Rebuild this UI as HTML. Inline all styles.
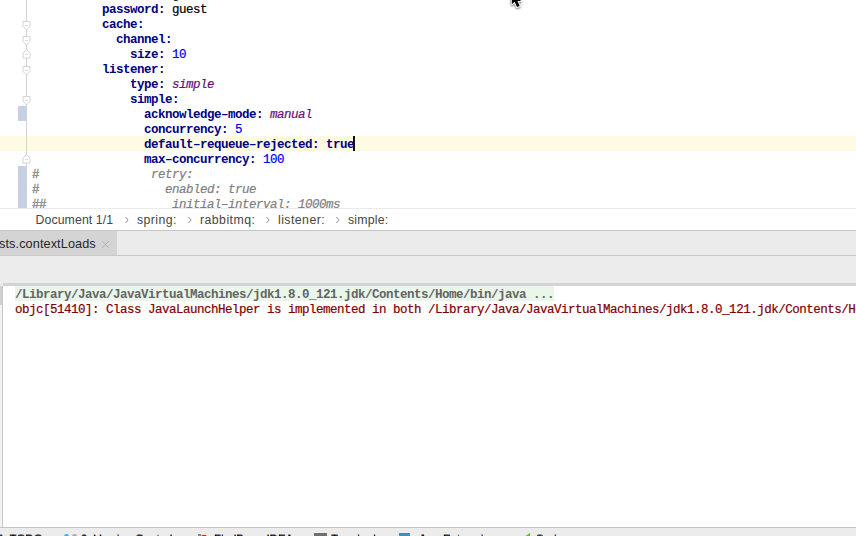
<!DOCTYPE html>
<html>
<head>
<meta charset="utf-8">
<style>
html,body{margin:0;padding:0;}
body{width:856px;height:536px;overflow:hidden;background:#fff;position:relative;font-family:"Liberation Sans",sans-serif;}
.abs{position:absolute;}
.ed{position:absolute;left:0;top:0;width:856px;height:208px;background:#fff;overflow:hidden;}
.ln{position:absolute;left:32px;height:15px;line-height:15px;white-space:pre;font-family:"Liberation Mono",monospace;font-size:12.5px;letter-spacing:-0.5px;color:#000;-webkit-text-stroke:0.2px;}
.k{color:#000080;font-weight:bold;-webkit-text-stroke:0;}
.n{color:#0000ff;}
.s{color:#660e7a;font-style:italic;}
.c{color:#808080;font-style:italic;}
.h{font-style:normal;-webkit-text-stroke:0.3px;}
.hl{position:absolute;left:0;top:136px;width:856px;height:15px;background:#fffae3;}
.gl{position:absolute;left:26px;top:0;width:1px;height:208px;background:#d2d2d2;}
.fm{position:absolute;left:22px;width:9px;height:10px;}
.chg{position:absolute;left:18px;width:8px;background:#c5d0e5;}
.caret{position:absolute;left:353.4px;top:136px;width:2px;height:15px;background:#111;}
.bc{position:absolute;left:0;top:208px;width:856px;height:22px;background:#fff;border-top:1px solid #ebebeb;box-sizing:border-box;font-size:12.3px;color:#454545;}
.bc span{position:absolute;top:4px;line-height:14px;white-space:pre;}
.tabbar{position:absolute;left:0;top:230px;width:856px;height:26px;background:#ebebeb;border-top:1px solid #c6c6c6;border-bottom:1px solid #c8c8c8;box-sizing:border-box;}
.tab{position:absolute;left:0;top:0;width:117px;height:24px;background:#d4d4d4;box-sizing:border-box;font-size:12.7px;color:#262626;}
.tb2{position:absolute;left:0;top:256px;width:856px;height:30px;background:#ececec;}
.con{position:absolute;left:3px;top:283px;width:853px;height:244px;background:#fff;overflow:hidden;}
.cl{position:absolute;left:12px;height:15px;line-height:15px;white-space:pre;font-family:"Liberation Mono",monospace;font-size:12.5px;letter-spacing:-0.5px;}
.bot{position:absolute;left:0;top:527px;width:856px;height:9px;background:#ececec;border-top:1px solid #c4c4c4;box-sizing:border-box;overflow:hidden;font-size:11.5px;color:#000;}
.bot span{position:absolute;top:4px;line-height:14px;white-space:pre;}
</style>
</head>
<body>
<div class="ed">
  <div class="hl"></div>
  <div class="gl"></div>
  <div class="chg" style="top:106px;height:15px;"></div>
  <div class="chg" style="top:166px;height:42px;"></div>
  <svg class="fm" style="top:21px;" viewBox="0 0 9 10"><path d="M1,0.5 H8 V5.3 L4.5,9 L1,5.3 Z" fill="#fff" stroke="#d4d4d4" stroke-width="1"/><path d="M3,4.5 H6" stroke="#dcdcdc" stroke-width="1"/></svg>
  <svg class="fm" style="top:36px;" viewBox="0 0 9 10"><path d="M1,0.5 H8 V5.3 L4.5,9 L1,5.3 Z" fill="#fff" stroke="#d4d4d4" stroke-width="1"/><path d="M3,4.5 H6" stroke="#dcdcdc" stroke-width="1"/></svg>
  <svg class="fm" style="top:66px;" viewBox="0 0 9 10"><path d="M1,0.5 H8 V5.3 L4.5,9 L1,5.3 Z" fill="#fff" stroke="#d4d4d4" stroke-width="1"/><path d="M3,4.5 H6" stroke="#dcdcdc" stroke-width="1"/></svg>
  <svg class="fm" style="top:96px;" viewBox="0 0 9 10"><path d="M1,0.5 H8 V5.3 L4.5,9 L1,5.3 Z" fill="#fff" stroke="#d4d4d4" stroke-width="1"/><path d="M3,4.5 H6" stroke="#dcdcdc" stroke-width="1"/></svg>
  <svg class="fm" style="top:49px;" viewBox="0 0 9 10"><path d="M1,9 H8 V4.2 L4.5,0.5 L1,4.2 Z" fill="#fff" stroke="#d4d4d4" stroke-width="1"/><path d="M3,5.5 H6" stroke="#dcdcdc" stroke-width="1"/></svg>
  <svg class="fm" style="top:154px;" viewBox="0 0 9 10"><path d="M1,9 H8 V4.2 L4.5,0.5 L1,4.2 Z" fill="#fff" stroke="#d4d4d4" stroke-width="1"/><path d="M3,5.5 H6" stroke="#dcdcdc" stroke-width="1"/></svg>

  <div class="ln" style="top:-12px;">          <span class="k">username:</span> guest</div>
  <div class="ln" style="top:3px;">          <span class="k">password:</span> guest</div>
  <div class="ln" style="top:18px;">          <span class="k">cache:</span></div>
  <div class="ln" style="top:33px;">            <span class="k">channel:</span></div>
  <div class="ln" style="top:48px;">              <span class="k">size:</span> <span class="n">10</span></div>
  <div class="ln" style="top:63px;">          <span class="k">listener:</span></div>
  <div class="ln" style="top:78px;">              <span class="k">type:</span> <span class="s">simple</span></div>
  <div class="ln" style="top:93px;">              <span class="k">simple:</span></div>
  <div class="ln" style="top:108px;">                <span class="k">acknowledge–mode:</span> <span class="s">manual</span></div>
  <div class="ln" style="top:123px;">                <span class="k">concurrency:</span> <span class="n">5</span></div>
  <div class="ln" style="top:138px;">                <span class="k">default–requeue–rejected:</span> <span class="k">true</span></div>
  <div class="ln" style="top:153px;">                <span class="k">max–concurrency:</span> <span class="n">100</span></div>
  <div class="ln c" style="top:168px;"><span class="h">#</span>                retry:</div>
  <div class="ln c" style="top:183px;"><span class="h">#</span>                  enabled: true</div>
  <div class="ln c" style="top:198px;"><span class="h">##</span>                  initial–interval: 1000ms</div>
  <div class="caret"></div>
</div>
<svg class="abs" style="left:500px;top:0;" width="30" height="16" viewBox="500 0 30 16"><defs><filter id="sh" x="-50%" y="-50%" width="200%" height="200%"><feGaussianBlur in="SourceAlpha" stdDeviation="0.9"/><feOffset dx="0" dy="0.8"/><feComponentTransfer><feFuncA type="linear" slope="0.7"/></feComponentTransfer><feMerge><feMergeNode/><feMergeNode in="SourceGraphic"/></feMerge></filter></defs><path d="M511.8,-10.8 L511.8,4.3 L514.7,1.7 L517.0,7.1 L519.7,6.0 L517.4,1.0 L520.9,1.0 Z" fill="#000" stroke="#fff" stroke-width="1.6" stroke-linejoin="round" paint-order="stroke" filter="url(#sh)"/></svg>
<div class="bc">
  <span style="left:35.5px;letter-spacing:0.1px;">Document 1/1</span>
  <span style="left:137px;letter-spacing:0.4px;">spring:</span>
  <span style="left:200px;letter-spacing:0.45px;">rabbitmq:</span>
  <span style="left:278px;letter-spacing:0.45px;">listener:</span>
  <span style="left:348px;letter-spacing:0.2px;">simple:</span>
  <svg class="abs" style="left:123.6px;top:6.7px;" width="6" height="8" viewBox="0 0 6 8"><path d="M1.5,1 L4.1,4 L1.5,7" fill="none" stroke="#959595" stroke-width="1"/></svg>
  <svg class="abs" style="left:186.6px;top:6.7px;" width="6" height="8" viewBox="0 0 6 8"><path d="M1.5,1 L4.1,4 L1.5,7" fill="none" stroke="#959595" stroke-width="1"/></svg>
  <svg class="abs" style="left:265.1px;top:6.7px;" width="6" height="8" viewBox="0 0 6 8"><path d="M1.5,1 L4.1,4 L1.5,7" fill="none" stroke="#959595" stroke-width="1"/></svg>
  <svg class="abs" style="left:334.7px;top:6.7px;" width="6" height="8" viewBox="0 0 6 8"><path d="M1.5,1 L4.1,4 L1.5,7" fill="none" stroke="#959595" stroke-width="1"/></svg>
</div>
<div class="tabbar">
  <div class="tab"><span class="abs" style="left:-1px;top:5px;line-height:16px;white-space:pre;letter-spacing:0.1px;">sts.contextLoads</span>
  <svg class="abs" style="left:101px;top:8.7px;" width="9" height="9" viewBox="0 0 9 9"><path d="M1,1 L8,8 M8,1 L1,8" fill="none" stroke="#b4b4b4" stroke-width="1"/></svg></div>
</div>
<div class="tb2"></div>
<div class="abs" style="left:0;top:286px;width:2px;height:241px;background:#f2f2f2;"></div>
<div class="abs" style="left:0;top:286px;width:2px;height:19px;background:#d0d0d0;"></div>
<div class="abs" style="left:2px;top:286px;width:1px;height:241px;background:#c6c6c6;"></div>
<div class="con">
  <div class="abs" style="left:0;top:0;width:854px;height:3px;background:#d4d4d4;"></div>
  <div class="abs" style="left:12px;top:3px;width:539px;height:15px;background:#e9f6e9;"></div>
  <div class="cl" style="top:5px;color:#646464;font-weight:bold;">/Library/Java/JavaVirtualMachines/jdk1.8.0_121.jdk/Contents/Home/bin/java ...</div>
  <div class="cl" style="top:20px;color:#7f0000;-webkit-text-stroke:0.2px #7f0000;">objc[51410]: Class JavaLaunchHelper is implemented in both /Library/Java/JavaVirtualMachines/jdk1.8.0_121.jdk/Contents/Home/bin/java and more</div>
</div>
<div class="bot">
  <span style="left:-3px;">6: TODO</span>
  <span style="left:81px;">9: Version Control</span>
  <span style="left:214px;">FindBugs-IDEA</span>
  <span style="left:331px;letter-spacing:0.2px;">Terminal</span>
  <span style="left:419px;">Java</span><span style="left:443px;">Enterprise</span>
  <span style="left:536px;">Spring</span>
  <div class="abs" style="left:0;top:-1px;width:856px;height:10px;opacity:0.55;">
  <span style="left:-3px;">6: TODO</span>
  <span style="left:81px;">9: Version Control</span>
  <span style="left:214px;">FindBugs-IDEA</span>
  <span style="left:331px;letter-spacing:0.2px;">Terminal</span>
  <span style="left:419px;">Java</span><span style="left:443px;">Enterprise</span>
  <span style="left:536px;">Spring</span>
  </div>
  <div class="abs" style="left:64px;top:5.7px;width:5.2px;height:5px;border-radius:3px;background:#3db0e4;"></div>
  <div class="abs" style="left:72px;top:5.7px;width:5.2px;height:5px;border-radius:3px;background:#a4acba;"></div>
  <div class="abs" style="left:198px;top:6px;width:3px;height:3px;background:#8a8a8a;"></div>
  <div class="abs" style="left:201px;top:7px;width:6px;height:3px;border-radius:2px 2px 0 0;background:#e8141c;"></div>
  <div class="abs" style="left:314px;top:5px;width:13px;height:5px;background:#6e6e6e;"></div>
  <div class="abs" style="left:399px;top:5px;width:11px;height:5px;background:#3c8fc6;"></div>
  <svg class="abs" style="left:524px;top:5px;" width="7" height="4" viewBox="0 0 7 4"><path d="M0,4 L6,0 L6,4 Z" fill="#6cb33e"/></svg>
</div>
</body>
</html>
